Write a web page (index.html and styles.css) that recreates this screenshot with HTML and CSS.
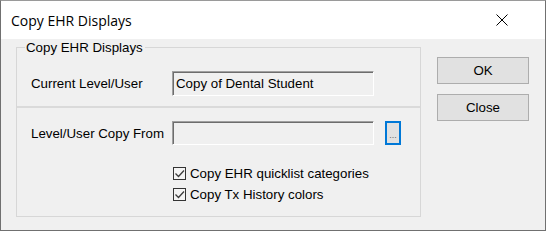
FILE: index.html
```html
<!DOCTYPE html>
<html lang="en">
<head>
    <meta charset="UTF-8">
    <title>Copy EHR Displays</title>
    <link rel="stylesheet" href="styles.css">
</head>
<body>
    <div class="window">
        <div class="titlebar">
            <span class="title">Copy EHR Displays</span>
            <svg class="close-x" width="12" height="12" viewBox="0 0 12 12">
                <path d="M0.5 0.5 L11.5 11.5 M11.5 0.5 L0.5 11.5" stroke="#000" stroke-width="1" fill="none"/>
            </svg>
        </div>

        <div class="dialog-body">
            <fieldset class="group">
                <legend>Copy EHR Displays</legend>

                <div class="row row-current">
                    <span class="label">Current Level/User</span>
                    <div class="field">Copy of Dental Student</div>
                </div>

                <div class="separator"></div>

                <div class="row row-from">
                    <span class="label">Level/User Copy From</span>
                    <div class="field field-from"></div>
                    <button class="browse"><span class="dots">...</span></button>
                </div>

                <div class="checks">
                    <label class="check"><span class="box"><svg width="11" height="11" viewBox="0 0 11 11"><path d="M1.5 5.5 L4.5 8.5 L10 2.5" stroke="#3c3c3c" stroke-width="1.3" fill="none"/></svg></span>Copy EHR quicklist categories</label>
                    <label class="check"><span class="box"><svg width="11" height="11" viewBox="0 0 11 11"><path d="M1.5 5.5 L4.5 8.5 L10 2.5" stroke="#3c3c3c" stroke-width="1.3" fill="none"/></svg></span>Copy Tx History colors</label>
                </div>
            </fieldset>

            <div class="buttons">
                <button class="btn">OK</button>
                <button class="btn">Close</button>
            </div>
        </div>
    </div>
</body>
</html>
```

FILE: styles.css
```css
* {
    margin: 0;
    padding: 0;
    box-sizing: border-box;
}

body {
    font-family: 'Liberation Sans', Arial, sans-serif;
    font-size: 13.3px;
    color: #000;
    background: #f0f0f0;
}

.window {
    width: 546px;
    height: 231px;
    border: 1px solid #707070;
    border-top-color: #9a9a9a;
    background: #f0f0f0;
    display: flex;
    flex-direction: column;
}

.titlebar {
    height: 38px;
    background: #fff;
    display: flex;
    align-items: center;
    justify-content: space-between;
    padding: 0 37px 0 10px;
}

.title {
    font-family: 'Open Sans', 'Noto Sans', sans-serif;
    font-size: 14px;
    color: #000;
}

.close-x {
    display: block;
}

.dialog-body {
    flex: 1;
    display: flex;
    align-items: flex-start;
}

.group {
    width: 405px;
    height: 177px;
    margin: 1px 0 0 15px;
    border: 1px solid #d7d7d7;
    padding: 0;
}

.group legend {
    margin-left: 8px;
    padding: 0 2px 0 1px;
    line-height: 15px;
}

.row {
    display: flex;
    align-items: center;
    padding-left: 14px;
}

.label {
    width: 141px;
}

.field {
    width: 202px;
    height: 25px;
    border: 1px solid;
    border-color: #a0a0a0 #fff #fff #a0a0a0;
    box-shadow: inset 1px 1px 0 #6d6d6d;
    background: #f0f0f0;
    padding: 4px 0 0 3px;
    white-space: nowrap;
}

.row-current {
    padding-top: 16px;
    padding-bottom: 10px;
}

.separator {
    height: 2px;
    background: #dadada;
}

.row-from {
    padding-top: 13px;
}

.field-from {
    height: 24px;
}

.browse {
    width: 16px;
    height: 24px;
    margin-left: 11px;
    border: 2px solid #0078d7;
    background: #e1e1e1;
    display: flex;
    align-items: flex-end;
    justify-content: center;
    padding-bottom: 4px;
}

.dots {
    font-family: 'Liberation Sans', sans-serif;
    font-size: 9px;
    line-height: 8px;
    color: #666;
}

.checks {
    padding: 18px 0 0 156px;
    display: flex;
    flex-direction: column;
}

.check {
    display: flex;
    align-items: center;
    height: 21px;
}

.box {
    width: 13px;
    height: 13px;
    border: 1px solid #333;
    background: #f4f4f4;
    margin-right: 4px;
    display: flex;
    align-items: center;
    justify-content: center;
}

.box svg {
    display: block;
}

.buttons {
    display: flex;
    flex-direction: column;
    gap: 10px;
    margin: 18px 0 0 16px;
}

.btn {
    width: 92px;
    height: 27px;
    border: 1px solid #adadad;
    background: #e1e1e1;
    font-family: 'Liberation Sans', Arial, sans-serif;
    font-size: 13.3px;
    color: #000;
}
```
